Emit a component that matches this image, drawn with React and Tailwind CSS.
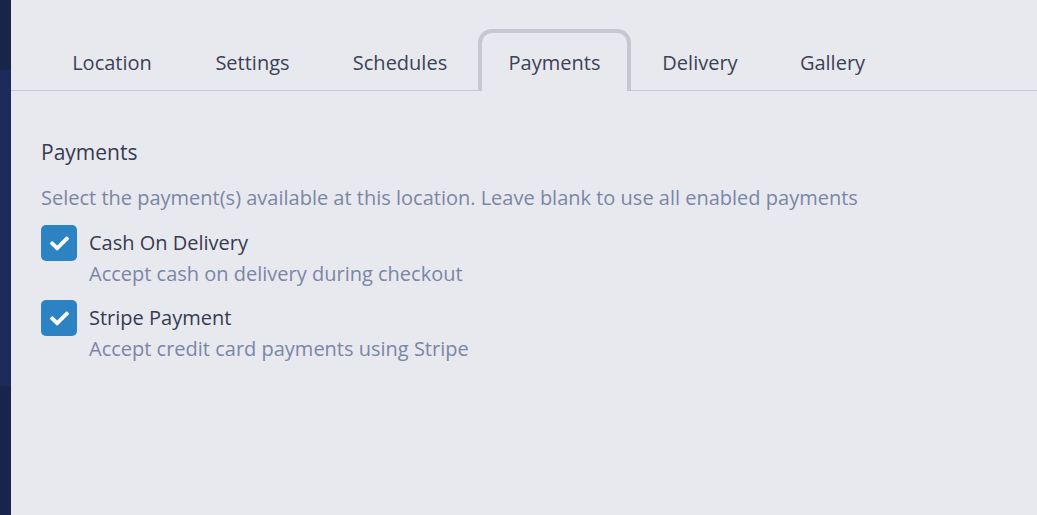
import React from "react";
import { FaCheck } from "react-icons/fa";

const tabs = [
  { t: "Location", w: "w-[142px]" },
  { t: "Settings", w: "w-[139px]" },
  { t: "Schedules", w: "w-[156px]" },
  { t: "Payments", w: "w-[153px]" },
  { t: "Delivery", w: "w-[138px]" },
  { t: "Gallery", w: "w-[127px]" },
];

function Check() {
  return (
    <div className="w-9 h-9 rounded-[5px] bg-[#2b83c4] flex items-center justify-center shrink-0">
      <FaCheck className="text-white w-[19px] h-[19px]" />
    </div>
  );
}

function Option({ title, desc }) {
  return (
    <div className="flex gap-3">
      <Check />
      <div className="flex flex-col">
        <div className="text-[20px] leading-[36px] text-[#363b4f]">{title}</div>
        <div className="text-[20px] leading-[26px] text-[#7b86a6]">{desc}</div>
      </div>
    </div>
  );
}

export default function App() {
  return (
    <div className="w-[1037px] h-[515px] flex bg-[#e8e9ef] overflow-hidden" style={{ fontFamily: '"Open Sans", "Noto Sans", sans-serif' }}>
      <div className="w-[11px] flex flex-col shrink-0">
        <div className="h-[70px] bg-[#172549]" />
        <div className="h-[316px] bg-[#1c2b59]" />
        <div className="flex-1 bg-[#17244b]" />
      </div>
      <div className="flex-1 flex flex-col">
        <div className="pt-[29px] pl-[30px] flex border-b border-[#c7c8d2] h-[91px] items-end">
          {tabs.map(({ t, w }) => {
            const active = t === "Payments";
            return (
              <div
                key={t}
                className={
                  w +
                  " h-[62px] flex items-center justify-center text-[20px] text-[#3b4256] -mb-px border-4 border-b-0 rounded-t-[14px] " +
                  (active ? "border-[#c6c7d1] bg-[#e8e9ef]" : "border-transparent")
                }
              >
                <span className="mt-[2px]">{t}</span>
              </div>
            );
          })}
        </div>
        <div className="pl-[30px] pt-[46px]">
          <div className="text-[21px] leading-[30px] text-[#363b4f]">Payments</div>
          <div className="text-[20px] leading-[26px] text-[#7b86a6] mt-[18px]">
            Select the payment(s) available at this location. Leave blank to use all enabled payments
          </div>
          <div className="mt-[14px] flex flex-col gap-[13px]">
            <Option title="Cash On Delivery" desc="Accept cash on delivery during checkout" />
            <Option title="Stripe Payment" desc="Accept credit card payments using Stripe" />
          </div>
        </div>
      </div>
    </div>
  );
}
